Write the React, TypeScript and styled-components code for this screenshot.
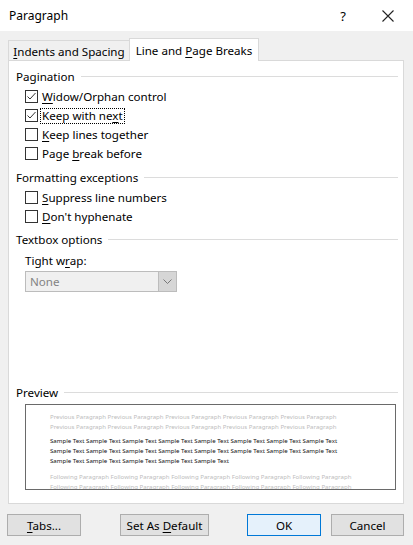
import styled, { createGlobalStyle } from 'styled-components'

const GlobalStyle = createGlobalStyle`
  html, body {
    margin: 0;
    padding: 0;
    background: #f0f0f0;
  }
  body {
    font-family: "Noto Sans", "Open Sans", sans-serif;
    font-size: 11.6px;
    color: #000;
  }
`;

const Dialog = styled.div`
  width: 413px;
  height: 545px;
  display: flex;
  flex-direction: column;
  background: #f0f0f0;
  overflow: hidden;
`;

const TitleBar = styled.div`
  height: 31px;
  background: #fff;
  display: flex;
  align-items: center;
  padding-left: 9px;
  font-size: 12px;
`;

const Title = styled.div`
  flex: 1;
`;

const HelpButton = styled.div`
  width: 20px;
  text-align: center;
  margin-right: 25px;
  font-size: 13px;
`;

const CloseButton = styled.div`
  width: 20px;
  margin-right: 15px;
  display: flex;
  justify-content: center;
`;

const Body = styled.div`
  padding: 7px 9px 0 8px;
  display: flex;
  flex-direction: column;
`;

const TabStrip = styled.div`
  display: flex;
  align-items: flex-end;
  height: 22px;
`;

const Tab = styled.div<{ $active?: boolean; $w: number }>`
  width: ${p => p.$w}px;
  height: ${p => (p.$active ? 23 : 20)}px;
  box-sizing: border-box;
  border: 1px solid #d9d9d9;
  border-bottom: none;
  background: ${p => (p.$active ? '#fff' : '#f0f0f0')};
  margin-left: ${p => (p.$active ? -1 : 0)}px;
  margin-bottom: ${p => (p.$active ? -1 : 0)}px;
  position: relative;
  z-index: ${p => (p.$active ? 1 : 0)};
  display: flex;
  align-items: center;
  justify-content: center;
  padding-top: ${p => (p.$active ? 0 : 2)}px;
`;

const Panel = styled.div`
  height: 444px;
  box-sizing: border-box;
  background: #fff;
  border: 1px solid #d9d9d9;
  padding: 7px 0 0 7px;
  display: flex;
  flex-direction: column;
`;

const GroupHead = styled.div`
  display: flex;
  align-items: center;
  height: 16px;
  gap: 6px;
  padding-right: 5px;
  &::after {
    content: "";
    flex: 1;
    height: 1px;
    background: #dcdcdc;
  }
`;

const Options = styled.div<{ $gap: number }>`
  padding: 3px 0 0 9px;
  margin-bottom: ${p => p.$gap}px;
`;

const Row = styled.div`
  display: flex;
  align-items: center;
  height: 19px;
  gap: 3px;
`;

const Box = styled.div`
  width: 13px;
  height: 13px;
  box-sizing: border-box;
  border: 1px solid #333;
  background: #fff;
  display: flex;
  align-items: center;
  justify-content: center;
`;

const Label = styled.span<{ $focus?: boolean }>`
  padding: 0 1px;
  line-height: 14px;
  outline: ${p => (p.$focus ? '1px dotted #000' : 'none')};
  outline-offset: 0;
`;

const Key = styled.span`
  text-decoration: underline;
  text-underline-offset: 2px;
`;

const FieldLabel = styled.div`
  padding: 5px 0 0 9px;
  height: 16px;
  display: flex;
  align-items: center;
`;

const Select = styled.div`
  margin: 3px 0 0 9px;
  width: 152px;
  height: 21px;
  box-sizing: border-box;
  border: 1px solid #bcbcbc;
  background: #f0f0f0;
  display: flex;
  align-items: stretch;
`;

const SelectValue = styled.div`
  flex: 1;
  color: #838383;
  padding-left: 4px;
  display: flex;
  align-items: center;
`;

const SelectArrow = styled.div`
  width: 17px;
  background: #d6d6d6;
  border-left: 1px solid #bcbcbc;
  display: flex;
  align-items: center;
  justify-content: center;
`;

const Spacer = styled.div`
  flex: 1;
`;

const PreviewBox = styled.div`
  margin: 4px 7px 13px 9px;
  height: 86px;
  box-sizing: border-box;
  border: 1px solid #6a6a6a;
  padding: 7px 0 0 24px;
  overflow: hidden;
`;

const PreviewPara = styled.div<{ $muted?: boolean; $after: number }>`
  font-size: 6.1px;
  line-height: 10px;
  color: ${p => (p.$muted ? '#bdbdbd' : '#111')};
  margin-bottom: ${p => p.$after}px;
  white-space: nowrap;
`;

const ButtonRow = styled.div`
  display: flex;
  margin: 10px 0 0 -1px;
`;

const Button = styled.div<{ $w: number; $gap?: number; $primary?: boolean }>`
  width: ${p => p.$w}px;
  height: 22px;
  box-sizing: border-box;
  margin-left: ${p => p.$gap ?? 0}px;
  background: ${p => (p.$primary ? '#e5f1fb' : '#e1e1e1')};
  border: 1px solid ${p => (p.$primary ? '#0078d7' : '#adadad')};
  display: flex;
  align-items: center;
  justify-content: center;
`;

const Check = () => (
  <svg width="11" height="11" viewBox="0 0 11 11">
    <polyline points="1.5,5.5 4,8 9.5,2" fill="none" stroke="#333" strokeWidth="1" />
  </svg>
);

const CheckRow = ({ checked, focus, children }: { checked?: boolean; focus?: boolean; children: React.ReactNode }) => (
  <Row>
    <Box>{checked && <Check />}</Box>
    <Label $focus={focus}>{children}</Label>
  </Row>
);

const prevLines = [
  'Previous Paragraph Previous Paragraph Previous Paragraph Previous Paragraph Previous Paragraph',
  'Previous Paragraph Previous Paragraph Previous Paragraph Previous Paragraph Previous Paragraph',
];
const sampleLines = [
  'Sample Text Sample Text Sample Text Sample Text Sample Text Sample Text Sample Text Sample Text',
  'Sample Text Sample Text Sample Text Sample Text Sample Text Sample Text Sample Text Sample Text',
  'Sample Text Sample Text Sample Text Sample Text Sample Text',
];
const nextLines = [
  'Following Paragraph Following Paragraph Following Paragraph Following Paragraph Following Paragraph',
  'Following Paragraph Following Paragraph Following Paragraph Following Paragraph Following Paragraph',
];

const App = () => {
  return (
    <Dialog>
      <GlobalStyle />
      <TitleBar>
        <Title>Paragraph</Title>
        <HelpButton>?</HelpButton>
        <CloseButton>
          <svg width="12" height="12" viewBox="0 0 12 12">
            <path d="M0.5 0.5 L11.5 11.5 M11.5 0.5 L0.5 11.5" stroke="#222" strokeWidth="1.1" />
          </svg>
        </CloseButton>
      </TitleBar>
      <Body>
        <TabStrip>
          <Tab $w={122}><span><Key>I</Key>ndents and Spacing</span></Tab>
          <Tab $w={130} $active><span>Line and <Key>P</Key>age Breaks</span></Tab>
        </TabStrip>
        <Panel>
          <GroupHead>Pagination</GroupHead>
          <Options $gap={6}>
            <CheckRow checked><Key>W</Key>idow/Orphan control</CheckRow>
            <CheckRow checked focus>Keep with ne<Key>x</Key>t</CheckRow>
            <CheckRow><Key>K</Key>eep lines together</CheckRow>
            <CheckRow>Page <Key>b</Key>reak before</CheckRow>
          </Options>
          <GroupHead>Formatting exceptions</GroupHead>
          <Options $gap={5}>
            <CheckRow><Key>S</Key>uppress line numbers</CheckRow>
            <CheckRow><Key>D</Key>on't hyphenate</CheckRow>
          </Options>
          <GroupHead>Textbox options</GroupHead>
          <FieldLabel>Tight w<Key>r</Key>ap:</FieldLabel>
          <Select>
            <SelectValue>None</SelectValue>
            <SelectArrow>
              <svg width="9" height="6" viewBox="0 0 9 6">
                <polyline points="0.5,0.5 4.5,4.5 8.5,0.5" fill="none" stroke="#777" strokeWidth="1" />
              </svg>
            </SelectArrow>
          </Select>
          <Spacer />
          <GroupHead>Preview</GroupHead>
          <PreviewBox>
            <PreviewPara $muted $after={4}>{prevLines.map((l, i) => <div key={i}>{l}</div>)}</PreviewPara>
            <PreviewPara $after={6}>{sampleLines.map((l, i) => <div key={i}>{l}</div>)}</PreviewPara>
            <PreviewPara $muted $after={0}>{nextLines.map((l, i) => <div key={i}>{l}</div>)}</PreviewPara>
          </PreviewBox>
        </Panel>
        <ButtonRow>
          <Button $w={74}><span><Key>T</Key>abs...</span></Button>
          <Button $w={89} $gap={39}>Set As&nbsp;<Key>D</Key>efault</Button>
          <Button $w={74} $gap={38} $primary>OK</Button>
          <Button $w={73} $gap={10}>Cancel</Button>
        </ButtonRow>
      </Body>
    </Dialog>
  )
}

export default App
